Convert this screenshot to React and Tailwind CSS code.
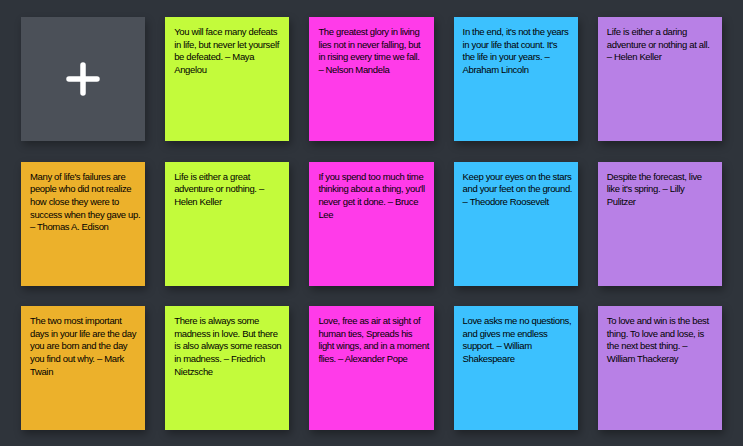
import React from "react";

const notes = [
  { color: "bg-[#c3fb3b]", lines: ["You will face many defeats", "in life, but never let yourself", "be defeated. – Maya", "Angelou"] },
  { color: "bg-[#ff3be9]", lines: ["The greatest glory in living", "lies not in never falling, but", "in rising every time we fall.", "– Nelson Mandela"] },
  { color: "bg-[#3cc1fe]", lines: ["In the end, it's not the years", "in your life that count. It's", "the life in your years. –", "Abraham Lincoln"] },
  { color: "bg-[#b880e6]", lines: ["Life is either a daring", "adventure or nothing at all.", "– Helen Keller"] },
  { color: "bg-[#ecb12b]", lines: ["Many of life's failures are", "people who did not realize", "how close they were to", "success when they gave up.", "– Thomas A. Edison"] },
  { color: "bg-[#c3fb3b]", lines: ["Life is either a great", "adventure or nothing. –", "Helen Keller"] },
  { color: "bg-[#ff3be9]", lines: ["If you spend too much time", "thinking about a thing, you'll", "never get it done. – Bruce", "Lee"] },
  { color: "bg-[#3cc1fe]", lines: ["Keep your eyes on the stars", "and your feet on the ground.", "– Theodore Roosevelt"] },
  { color: "bg-[#b880e6]", lines: ["Despite the forecast, live", "like it's spring. – Lilly", "Pulitzer"] },
  { color: "bg-[#ecb12b]", lines: ["The two most important", "days in your life are the day", "you are born and the day", "you find out why. – Mark", "Twain"] },
  { color: "bg-[#c3fb3b]", lines: ["There is always some", "madness in love. But there", "is also always some reason", "in madness. – Friedrich", "Nietzsche"] },
  { color: "bg-[#ff3be9]", lines: ["Love, free as air at sight of", "human ties, Spreads his", "light wings, and in a moment", "flies. – Alexander Pope"] },
  { color: "bg-[#3cc1fe]", lines: ["Love asks me no questions,", "and gives me endless", "support. – William", "Shakespeare"] },
  { color: "bg-[#b880e6]", lines: ["To love and win is the best", "thing. To love and lose, is", "the next best thing. –", "William Thackeray"] },
];

const Note = ({ color, lines }) => (
  <div className={`${color} h-[124px] px-[9px] pt-[9px] shadow-[2px_4px_8px_rgba(0,0,0,0.35)]`}>
    {lines.map((line, i) => (
      <div key={i} className="whitespace-nowrap text-[9.5px] leading-[12.7px] tracking-[-0.35px] text-black">
        {line}
      </div>
    ))}
  </div>
);

const App = () => {
  return (
    <div
      className="w-[743px] h-[446px] overflow-hidden bg-[#2f343b] px-[21px] pt-[17px]"
      style={{ fontFamily: '"Liberation Sans", Arial, sans-serif' }}
    >
      <div className="grid grid-cols-5 gap-x-[20px] gap-y-[20.5px]">
        {/* Add note button */}
        <button className="h-[124px] bg-[#4b5058] flex items-center justify-center shadow-[2px_4px_8px_rgba(0,0,0,0.3)]">
          <svg width="36" height="36" viewBox="0 0 36 36">
            <path d="M18 4v28M4 18h28" stroke="#fff" strokeWidth="5.5" strokeLinecap="round" />
          </svg>
        </button>
        {notes.map((n, i) => (
          <Note key={i} color={n.color} lines={n.lines} />
        ))}
      </div>
    </div>
  );
};

export default App;
